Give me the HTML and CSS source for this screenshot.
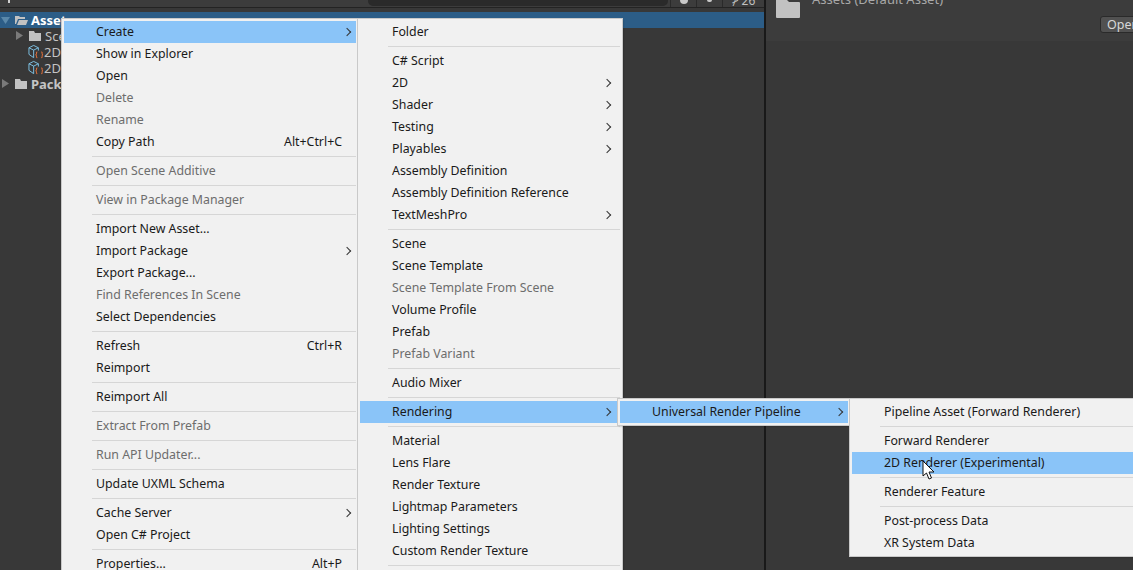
FILE: index.html
```html
<!DOCTYPE html>
<html lang="en">
<head>
<meta charset="utf-8">
<title>Project window context menu</title>
<link rel="stylesheet" href="styles.css">
</head>
<body>
<div class="app">
  <section class="left">
    <div class="toolbar">
      <div class="toolbar-start"><span class="tick"></span></div>
      <div class="search"></div>
      <div class="tool first"><span class="dot"></span></div>
      <div class="tool"><span class="dot small"></span></div>
      <div class="tool count">≯ 26</div>
    </div>
    <div class="tree">
      <div class="node selected">
        <svg class="arrow" width="10" height="10" viewBox="0 0 10 10"><path d="M0 2h9L4.500 9z"/></svg>
        <svg class="folder" width="14" height="12" viewBox="0 0 14 12"><path d="M1 10V2h4l1 1h5v2H4L2 10zM3 11l2-5h9l-2 5z"/></svg>
        <span class="label strong">Assets</span>
      </div>
      <div class="node level1">
        <svg class="arrow" width="10" height="10" viewBox="0 0 10 10"><path d="M1 0v9l7-4.500z"/></svg>
        <svg class="folder" width="14" height="12" viewBox="0 0 14 12"><path d="M1 1h5l1 2h6v8H1z"/></svg>
        <span class="label clip-3">Scenes</span>
      </div>
      <div class="node level2">
        <svg class="asset" width="16" height="16" viewBox="0 0 17 16"><path class="cube" d="M6 1l5 2.500v3M6 1L1 3.500v7L6 14M1 3.500L6 6v8M6 6l5-2.500"/><path class="braces" d="M10 8H9v2.500l-1 .5 1 .5V14h1M14 8h1v2.500l1 .5-1 .5V14h-1"/></svg>
        <span class="label clip-2">2D Renderer</span>
      </div>
      <div class="node level2">
        <svg class="asset" width="16" height="16" viewBox="0 0 17 16"><path class="cube" d="M6 1l5 2.500v3M6 1L1 3.500v7L6 14M1 3.500L6 6v8M6 6l5-2.500"/><path class="braces" d="M10 8H9v2.500l-1 .5 1 .5V14h1M14 8h1v2.500l1 .5-1 .5V14h-1"/></svg>
        <span class="label clip-2">2D Pipeline</span>
      </div>
      <div class="node">
        <svg class="arrow" width="10" height="10" viewBox="0 0 10 10"><path d="M1 0v9l7-4.500z"/></svg>
        <svg class="folder" width="14" height="12" viewBox="0 0 14 12"><path d="M1 1h5l1 2h6v8H1z"/></svg>
        <span class="label strong clip-4">Packages</span>
      </div>
    </div>
  </section>
  <div class="divider"></div>
  <section class="right">
    <div class="inspector-head">
      <svg class="big-folder" width="24" height="20" viewBox="0 0 24 20"><path d="M1 0h9l3 3h10a1 1 0 0 1 1 1v14a1 1 0 0 1-1 1H1a1 1 0 0 1-1-1V1a1 1 0 0 1 1-1z"/></svg>
      <span class="asset-title">Assets (Default Asset)</span>
      <button class="open">Open</button>
    </div>
  </section>
</div>

<div class="menu menu-main">
  <div class="item active"><span>Create</span><i class="chev"></i></div>
  <div class="item"><span>Show in Explorer</span></div>
  <div class="item"><span>Open</span></div>
  <div class="item off"><span>Delete</span></div>
  <div class="item off"><span>Rename</span></div>
  <div class="item"><span>Copy Path</span><kbd>Alt+Ctrl+C</kbd></div>
  <hr>
  <div class="item off"><span>Open Scene Additive</span></div>
  <hr>
  <div class="item off"><span>View in Package Manager</span></div>
  <hr>
  <div class="item"><span>Import New Asset...</span></div>
  <div class="item"><span>Import Package</span><i class="chev"></i></div>
  <div class="item"><span>Export Package...</span></div>
  <div class="item off"><span>Find References In Scene</span></div>
  <div class="item"><span>Select Dependencies</span></div>
  <hr>
  <div class="item"><span>Refresh</span><kbd>Ctrl+R</kbd></div>
  <div class="item"><span>Reimport</span></div>
  <hr>
  <div class="item"><span>Reimport All</span></div>
  <hr>
  <div class="item off"><span>Extract From Prefab</span></div>
  <hr>
  <div class="item off"><span>Run API Updater...</span></div>
  <hr>
  <div class="item"><span>Update UXML Schema</span></div>
  <hr>
  <div class="item"><span>Cache Server</span><i class="chev"></i></div>
  <div class="item"><span>Open C# Project</span></div>
  <hr>
  <div class="item"><span>Properties...</span><kbd>Alt+P</kbd></div>
</div>

<div class="menu menu-create">
  <div class="item"><span>Folder</span></div>
  <hr>
  <div class="item"><span>C# Script</span></div>
  <div class="item"><span>2D</span><i class="chev"></i></div>
  <div class="item"><span>Shader</span><i class="chev"></i></div>
  <div class="item"><span>Testing</span><i class="chev"></i></div>
  <div class="item"><span>Playables</span><i class="chev"></i></div>
  <div class="item"><span>Assembly Definition</span></div>
  <div class="item"><span>Assembly Definition Reference</span></div>
  <div class="item"><span>TextMeshPro</span><i class="chev"></i></div>
  <hr>
  <div class="item"><span>Scene</span></div>
  <div class="item"><span>Scene Template</span></div>
  <div class="item off"><span>Scene Template From Scene</span></div>
  <div class="item"><span>Volume Profile</span></div>
  <div class="item"><span>Prefab</span></div>
  <div class="item off"><span>Prefab Variant</span></div>
  <hr>
  <div class="item"><span>Audio Mixer</span></div>
  <hr>
  <div class="item active"><span>Rendering</span><i class="chev"></i></div>
  <hr>
  <div class="item"><span>Material</span></div>
  <div class="item"><span>Lens Flare</span></div>
  <div class="item"><span>Render Texture</span></div>
  <div class="item"><span>Lightmap Parameters</span></div>
  <div class="item"><span>Lighting Settings</span></div>
  <div class="item"><span>Custom Render Texture</span></div>
  <hr>
</div>

<div class="menu menu-rendering">
  <div class="item active"><span>Universal Render Pipeline</span><i class="chev"></i></div>
</div>

<div class="menu menu-urp">
  <div class="item"><span>Pipeline Asset (Forward Renderer)</span></div>
  <hr>
  <div class="item"><span>Forward Renderer</span></div>
  <div class="item active"><span>2D Renderer (Experimental)</span></div>
  <hr>
  <div class="item"><span>Renderer Feature</span></div>
  <hr>
  <div class="item"><span>Post-process Data</span></div>
  <div class="item"><span>XR System Data</span></div>
</div>

<svg class="cursor" width="13" height="20" viewBox="0 0 13 20"><path d="M1 1v15l3.500-3 2.500 6 2.500-1-2.500-6H12z"/></svg>
</body>
</html>
```
FILE: styles.css
```css
* { box-sizing: border-box; }
html, body { margin: 0; height: 100%; overflow: hidden; }
body { background: #383838; font-family: "Noto Sans", "Open Sans", sans-serif; font-size: 12.35px; color: #1a1a1a; }

.app { display: flex; height: 570px; }
.left { width: 764px; background: #383838; flex: none; }
.divider { width: 2px; background: #191919; flex: none; }
.right { flex: 1; background: #383838; min-width: 0; }

.toolbar { display: flex; height: 8px; margin-bottom: 4px; background: #3c3c3c; border-bottom: 1px solid #232323; overflow: hidden; }
.toolbar-start { width: 368px; padding-left: 8px; }
.tick { display: block; width: 2px; height: 3px; background: #d0d0d0; }
.search { width: 300px; height: 6px; background: #2a2a2a; border-radius: 0 0 5px 5px; }
.tool { width: 26px; border-left: 1px solid #2a2a2a; display: flex; justify-content: center; }
.tool.first { margin-left: 2px; }
.dot { width: 8px; height: 4px; background: #c8c8c8; border-radius: 0 0 4px 4px; }
.dot.small { width: 5px; height: 2px; }
.tool.count { width: 42px; color: #c0c0c0; font-size: 12px; line-height: 0; padding-top: 1px; }

.tree { display: flex; flex-direction: column; }
.node { height: 16px; display: flex; align-items: center; padding-left: 1px; gap: 3px; color: #c4c4c4; font-size: 13px; white-space: nowrap; }
.node.selected { background: #2c5d87; color: #fff; }
.node.level1 { padding-left: 15px; }
.node.level2 { padding-left: 28px; gap: 0; }
.label { line-height: 16px; }
.label.strong { font-weight: 700; }
.clip-2 { width: 18px; overflow: hidden; }
.clip-3 { width: 18px; overflow: hidden; }
.clip-4 { width: 31px; overflow: hidden; }
.arrow { fill: #7a7a7a; flex: none; }
.selected .arrow { fill: #5a88aa; }
.folder { fill: #c2c2c2; flex: none; }
.cube { fill: none; stroke: #7fc4e8; stroke-width: 1; }
.braces { fill: none; stroke: #e0703c; stroke-width: 1; }
.asset { flex: none; }

.inspector-head { height: 41px; background: #3c3c3c; position: relative; display: flex; justify-content: flex-start; overflow: hidden; }
.big-folder { fill: #c2c2c2; margin: -1px 0 0 10px; flex: none; }
.asset-title { color: #a8a8a8; font-size: 13px; line-height: 16px; margin: -9px 0 0 12px; }
.open { position: absolute; left: 334px; top: 16px; width: 50px; height: 17px; padding: 0 0 0 6px; border: 1px solid #2a2a2a; border-radius: 3px; background: #515151; color: #d8d8d8; font: 12.5px/15px "Noto Sans", sans-serif; text-align: left; }

.menu { position: absolute; background: #f1f1f1; border: 2px solid #f1f1f1; outline: 1px solid #c9c9c9; box-shadow: 1px 1px 2px rgba(0, 0, 0, .35); }
.menu-main { left: 62px; top: 19px; width: 296px; height: 560px; }
.menu-create { left: 358px; top: 19px; width: 264px; height: 560px; }
.menu-rendering { left: 618px; top: 399px; width: 232px; height: 26px; }
.menu-urp { left: 850px; top: 399px; width: 290px; height: 157px; }

.item { height: 22px; display: flex; align-items: center; justify-content: space-between; padding: 0 7px 1px 32px; white-space: nowrap; line-height: 20px; }
.menu-create .item { padding-right: 11px; }
.item span { display: block; }
.item.active { background: #8ac4f8; }
.item.off { color: #6d6d6d; }
.item kbd { font: inherit; margin-right: 7px; }
.menu hr { height: 1px; margin: 3px 0 3px 28px; border: 0; background: #d6d6d6; }

.chev { width: 6px; height: 6px; border-top: 1px solid #333; border-right: 1px solid #333; transform: rotate(45deg); margin-right: -1px; }
.cursor { position: absolute; left: 922px; top: 460px; fill: #fff; stroke: #111; stroke-width: 1; }
```
